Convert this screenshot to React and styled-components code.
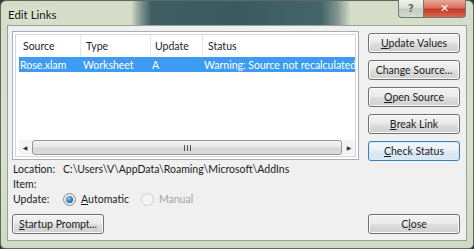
import React from 'react'
import styled, { createGlobalStyle, css } from 'styled-components'

const Global = createGlobalStyle`
  html, body {
    margin: 0;
    padding: 0;
    width: 474px;
    height: 249px;
    overflow: hidden;
    background: #2c3a3a;
  }
  * { box-sizing: border-box; }
`

const Window = styled.div`
  width: 474px;
  height: 249px;
  display: flex;
  flex-direction: column;
  font-family: Lato, "Open Sans", sans-serif;
  font-size: 10.5px;
  color: #1b1b1b;
  border-radius: 6px 6px 5px 5px;
  border: 1px solid #5e6a5e;
  background: linear-gradient(180deg, #d5ddc9 0%, #d9e2ce 60%, #cfd9c3 100%);
`

const TitleBar = styled.div`
  height: 24px;
  display: flex;
  align-items: flex-start;
  padding-left: 7px;
  background: linear-gradient(
    90deg,
    rgba(0, 0, 0, 0) 0px,
    rgba(0, 0, 0, 0) 130px,
    rgba(58, 88, 94, 0.55) 140px,
    #3f5e64 150px,
    #3a5a60 240px,
    #44656a 320px,
    rgba(70, 100, 100, 0.6) 336px,
    rgba(0, 0, 0, 0) 350px
  );
`

const Title = styled.span`
  margin-top: 7px;
  font-size: 11.5px;
  color: #111;
  text-shadow: 0 0 6px #e6eddc, 0 0 3px #e6eddc;
`

const Controls = styled.div`
  margin-left: auto;
  margin-right: 7px;
  margin-top: -1px;
  display: flex;
  height: 18px;
`

const CaptionButton = styled.div`
  display: flex;
  align-items: center;
  justify-content: center;
  border: 1px solid #6d7a70;
  border-top: none;
  font-family: "DejaVu Sans", sans-serif;
  font-weight: bold;
  ${p => p.$close ? css`
    width: 42px;
    border-radius: 0 0 4px 0;
    border-left: none;
    color: #fff;
    font-size: 11px;
    background: linear-gradient(180deg, #e9a89a 0%, #d9705f 45%, #c53a25 55%, #d8674f 100%);
  ` : css`
    width: 26px;
    border-radius: 0 0 0 4px;
    color: #5d6a70;
    font-size: 10px;
    background: linear-gradient(180deg, #eef2ec 0%, #d9e0d6 45%, #c3ccc0 55%, #d4dbd0 100%);
  `}
`

const Client = styled.div`
  flex: 1;
  margin: 0 6px 7px 6px;
  border: 1px solid #98a398;
  background: #f0f0f0;
  padding: 5px 6px 6px 4px;
  display: flex;
  flex-direction: column;
`

const TopArea = styled.div`
  display: flex;
  gap: 9px;
`

const LeftColumn = styled.div`
  width: 347px;
  display: flex;
  flex-direction: column;
`

const ListFrame = styled.div`
  height: 129px;
  border: 1px solid #a9aeb2;
  background: #fff;
  padding: 2px;
`

const ListView = styled.div`
  height: 100%;
  border: 1px solid #d2d6da;
  display: flex;
  flex-direction: column;
  padding: 0 0 1px 3px;
`

const HeaderRow = styled.div`
  display: flex;
  height: 21px;
  align-items: center;
  margin-left: -3px;
`

const HeaderCell = styled.div`
  width: ${p => p.$w ? p.$w + 'px' : 'auto'};
  flex: ${p => p.$w ? 'none' : 1};
  height: 100%;
  display: flex;
  align-items: center;
  padding-left: ${p => p.$pl || 5}px;
  border-right: ${p => p.$w ? '1px solid #e3e5e8' : 'none'};
  color: #1e1e1e;
`

const Row = styled.div`
  display: flex;
  height: 15px;
  align-items: center;
  margin-top: 1px;
  background: ${p => p.$selected ? '#3e9bf2' : 'transparent'};
  color: ${p => p.$selected ? '#fff' : '#1b1b1b'};
`

const Cell = styled.div`
  width: ${p => p.$w ? p.$w + 'px' : 'auto'};
  flex: ${p => p.$w ? 'none' : 1};
  padding-left: ${p => p.$pl || 2}px;
  white-space: nowrap;
  overflow: ${p => p.$w ? 'hidden' : 'visible'};
`

const Spacer = styled.div`
  flex: 1;
`

const ScrollBar = styled.div`
  height: 15px;
  display: flex;
  align-items: center;
  background: #f3f3f3;
`

const Arrow = styled.div`
  width: 12px;
  height: 15px;
  display: flex;
  align-items: center;
  justify-content: center;
  font-size: 6px;
  color: #333;
  font-family: "DejaVu Sans", sans-serif;
`

const Thumb = styled.div`
  flex: 1;
  height: 15px;
  margin: 0 1px;
  border: 1px solid #979797;
  border-radius: 3px;
  background: linear-gradient(180deg, #f4f4f4 0%, #e8e8e8 45%, #d6d6d6 55%, #dcdcdc 100%);
  display: flex;
  align-items: center;
  justify-content: center;
`

const Grip = styled.div`
  width: 7px;
  height: 6px;
  border-left: 1px solid #555;
  border-right: 1px solid #555;
  position: relative;
  &::after {
    content: '';
    position: absolute;
    left: 2px;
    top: 0;
    width: 1px;
    height: 6px;
    background: #555;
  }
`

const ButtonColumn = styled.div`
  width: 92px;
  padding-top: 2px;
  display: flex;
  flex-direction: column;
  gap: 7px;
`

const Button = styled.div`
  height: 20px;
  width: ${p => p.$w || 92}px;
  display: flex;
  align-items: center;
  justify-content: center;
  border-radius: 3px;
  color: #1b1b1b;
  border: 1px solid ${p => p.$focused ? '#3c7fb1' : '#707070'};
  box-shadow: inset 0 0 0 1px ${p => p.$focused ? '#d7ecf9' : '#fbfbfb'};
  background: ${p => p.$focused
    ? 'linear-gradient(180deg, #f2f8fc 0%, #e9f3fa 45%, #dce9f3 55%, #d8e6f1 100%)'
    : 'linear-gradient(180deg, #f2f2f2 0%, #ebebeb 45%, #dddddd 55%, #cfcfcf 100%)'};
  white-space: nowrap;
`

const Info = styled.div`
  display: flex;
  flex-direction: column;
  padding-top: 2px;
  padding-left: 1px;
`

const InfoLine = styled.div`
  display: flex;
  align-items: center;
  height: ${p => p.$h || 14.5}px;
`

const Label = styled.span`
  width: 50px;
`

const RadioGroup = styled.label`
  display: flex;
  align-items: center;
  margin-right: 12px;
  color: ${p => p.$disabled ? '#a3a3a3' : '#1b1b1b'};
`

const RadioDot = styled.span`
  width: 13px;
  height: 13px;
  border-radius: 50%;
  margin-right: 5px;
  border: 1px solid ${p => p.$disabled ? '#cfcfcf' : '#8e8f8f'};
  background: ${p => p.$disabled ? '#f4f4f4' : 'radial-gradient(circle at 50% 40%, #fafafa, #d9d9d9)'};
  display: flex;
  align-items: center;
  justify-content: center;
  &::after {
    content: '';
    display: ${p => p.$checked ? 'block' : 'none'};
    width: 7px;
    height: 7px;
    border-radius: 50%;
    background: radial-gradient(circle at 40% 35%, #8fd0f5 0%, #2b78b8 55%, #174e86 100%);
  }
`

const BottomRow = styled.div`
  display: flex;
  justify-content: space-between;
  align-items: flex-end;
  margin-top: auto;
`

const Key = styled.u`
  text-underline-offset: 1px;
`

export default function App() {
  return (
    <>
      <Global />
      <Window>
        <TitleBar>
          <Title>Edit Links</Title>
          <Controls>
            <CaptionButton>?</CaptionButton>
            <CaptionButton $close>✕</CaptionButton>
          </Controls>
        </TitleBar>
        <Client>
          <TopArea>
            <LeftColumn>
              <ListFrame>
                <ListView>
                  <HeaderRow>
                    <HeaderCell $w={65} $pl={7}>Source</HeaderCell>
                    <HeaderCell $w={70}>Type</HeaderCell>
                    <HeaderCell $w={52} $pl={4}>Update</HeaderCell>
                    <HeaderCell $pl={5}>Status</HeaderCell>
                  </HeaderRow>
                  <Row $selected>
                    <Cell $w={62} $pl={1}>Rose.xlam</Cell>
                    <Cell $w={70} $pl={2}>Worksheet</Cell>
                    <Cell $w={52} $pl={1}>A</Cell>
                    <Cell $pl={1}>Warning: Source not recalculated</Cell>
                  </Row>
                  <Spacer />
                  <ScrollBar>
                    <Arrow>◀</Arrow>
                    <Thumb><Grip /></Thumb>
                    <Arrow>▶</Arrow>
                  </ScrollBar>
                </ListView>
              </ListFrame>
              <Info>
                <InfoLine><Label>Location:</Label>C:\Users\V\AppData\Roaming\Microsoft\AddIns</InfoLine>
                <InfoLine><Label>Item:</Label></InfoLine>
                <InfoLine $h={16}>
                  <Label>Update:</Label>
                  <RadioGroup><RadioDot $checked /><Key>A</Key>utomatic</RadioGroup>
                  <RadioGroup $disabled><RadioDot $disabled />Manual</RadioGroup>
                </InfoLine>
              </Info>
            </LeftColumn>
            <ButtonColumn>
              <Button><Key>U</Key>pdate Values</Button>
              <Button>Chan<Key>g</Key>e Source...</Button>
              <Button><Key>O</Key>pen Source</Button>
              <Button><Key>B</Key>reak Link</Button>
              <Button $focused><Key>C</Key>heck Status</Button>
            </ButtonColumn>
          </TopArea>
          <BottomRow>
            <Button><Key>S</Key>tartup Prompt...</Button>
            <Button>C<Key>l</Key>ose</Button>
          </BottomRow>
        </Client>
      </Window>
    </>
  )
}
